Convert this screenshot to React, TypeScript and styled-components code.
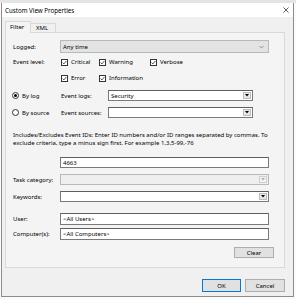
import React from 'react';
import styled, { createGlobalStyle } from 'styled-components';

const GlobalStyle = createGlobalStyle`
  html, body {
    margin: 0;
    padding: 0;
    background: #fbfbfb;
  }
  body {
    font-family: "Noto Sans", "DejaVu Sans", sans-serif;
    font-size: 6px;
    color: #000;
  }
`;

const Screen = styled.div`
  width: 296px;
  height: 300px;
  overflow: hidden;
  background: #fbfbfb;
`;

const Backdrop = styled.div`
  height: 3px;
  background: #e4e4e4;
`;

const Window = styled.div`
  margin-left: 1px;
  width: 293px;
  height: 294px;
  box-sizing: border-box;
  border: 1px solid #8c8c8c;
  border-top: none;
  background: #f0f0f0;
  display: flex;
  flex-direction: column;
`;

const TitleBar = styled.div`
  height: 14px;
  flex: none;
  background: #ffffff;
  display: flex;
  align-items: center;
  justify-content: space-between;
  padding: 0 4px 0 3px;
`;

const Title = styled.span`
  font-size: 6.2px;
`;

const Body = styled.div`
  flex: 1;
  display: flex;
  flex-direction: column;
  padding: 4px 8px 0 3px;
`;

const TabStrip = styled.div`
  height: 11px;
  display: flex;
  align-items: flex-end;
`;

const Tab = styled.div<{ $active?: boolean; $width: number }>`
  width: ${p => p.$width}px;
  height: ${p => (p.$active ? 12 : 9)}px;
  box-sizing: border-box;
  border: 1px solid #d9d9d9;
  border-bottom: none;
  border-left: ${p => (p.$active ? '1px solid #d9d9d9' : 'none')};
  background: ${p => (p.$active ? '#f4f4f4' : '#f0f0f0')};
  margin-bottom: ${p => (p.$active ? -1 : 0)}px;
  position: relative;
  z-index: ${p => (p.$active ? 1 : 0)};
  display: flex;
  align-items: center;
  padding-left: ${p => (p.$active ? 4 : 5)}px;
  padding-bottom: ${p => (p.$active ? 1 : 0)}px;
`;

const Panel = styled.div`
  width: 280px;
  height: 236px;
  box-sizing: border-box;
  border: 1px solid #d9d9d9;
  background: #f4f4f4;
  padding-left: 7px;
  display: flex;
  flex-direction: column;
`;

const Row = styled.div<{ $top: number; $height: number }>`
  margin-top: ${p => p.$top}px;
  height: ${p => p.$height}px;
  display: flex;
  align-items: center;
  flex: none;
`;

const Label = styled.span<{ $width: number }>`
  width: ${p => p.$width}px;
  flex: none;
  white-space: nowrap;
`;

const Field = styled.div<{ $width: number; $tone?: 'white' | 'disabled' | 'locked' }>`
  width: ${p => p.$width}px;
  height: 100%;
  box-sizing: border-box;
  flex: none;
  display: flex;
  align-items: center;
  justify-content: space-between;
  padding: 0 1px 0 2px;
  border: 1px solid ${p => (p.$tone === 'white' || !p.$tone ? '#7a7a7a' : '#b9b9b9')};
  border-top-color: ${p => (p.$tone === 'white' || !p.$tone ? '#5f5f5f' : '#b9b9b9')};
  background: ${p => (p.$tone === 'locked' ? '#e3e3e3' : p.$tone === 'disabled' ? '#efefef' : '#ffffff')};
`;

const Value = styled.span`
  white-space: nowrap;
`;

const DropButton = styled.span<{ $disabled?: boolean }>`
  width: 8px;
  height: 7px;
  box-sizing: border-box;
  border: 1px solid ${p => (p.$disabled ? '#d0d0d0' : '#bdbdbd')};
  background: ${p => (p.$disabled ? '#f2f2f2' : '#e8e8e8')};
  display: flex;
  align-items: center;
  justify-content: center;
  color: ${p => (p.$disabled ? '#b0b0b0' : '#000')};
`;

const CheckGroup = styled.div`
  display: flex;
  align-items: center;
`;

const CheckItem = styled.div<{ $width: number }>`
  width: ${p => p.$width}px;
  display: flex;
  align-items: center;
  gap: 3px;
`;

const Box = styled.span`
  width: 7px;
  height: 7px;
  box-sizing: border-box;
  border: 1px solid #333;
  background: #fff;
  display: flex;
  align-items: center;
  justify-content: center;
`;

const RadioItem = styled.div<{ $width: number }>`
  width: ${p => p.$width}px;
  flex: none;
  display: flex;
  align-items: center;
  gap: 3px;
  margin-left: -1px;
`;

const Circle = styled.span<{ $on?: boolean }>`
  width: 7px;
  height: 7px;
  box-sizing: border-box;
  border-radius: 50%;
  border: 1px solid #333;
  background: #fff;
  display: flex;
  align-items: center;
  justify-content: center;
  &::after {
    content: '';
    width: 3px;
    height: 3px;
    border-radius: 50%;
    background: ${p => (p.$on ? '#000' : 'transparent')};
  }
`;

const Description = styled.p`
  margin: 0;
  width: 262px;
  line-height: 8px;
`;

const Button = styled.div<{ $width: number; $primary?: boolean }>`
  width: ${p => p.$width}px;
  height: 100%;
  box-sizing: border-box;
  border: 1px solid ${p => (p.$primary ? '#0078d7' : '#adadad')};
  background: #e1e1e1;
  display: flex;
  align-items: center;
  justify-content: center;
`;

const ClearRow = styled(Row)`
  justify-content: flex-end;
  padding-right: 10px;
`;

const Footer = styled.div`
  margin-top: 11px;
  height: 13px;
  display: flex;
  justify-content: flex-end;
  gap: 4px;
`;

const Triangle = () => (
  <svg width="4" height="3" viewBox="0 0 4 3">
    <path d="M0 0 H4 L2 2.6 Z" fill="currentColor" />
  </svg>
);

const Combo = ({ width, value, tone }: { width: number; value?: string; tone?: 'white' | 'disabled' }) => (
  <Field $width={width} $tone={tone}>
    <Value>{value}</Value>
    <DropButton $disabled={tone === 'disabled'}>
      <Triangle />
    </DropButton>
  </Field>
);

const Check = ({ label, width }: { label: string; width: number }) => (
  <CheckItem $width={width}>
    <Box>
      <svg width="5" height="5" viewBox="0 0 5 5">
        <path d="M0.6 2.6 L1.9 3.9 L4.4 1" fill="none" stroke="#222" strokeWidth="0.8" />
      </svg>
    </Box>
    <span>{label}</span>
  </CheckItem>
);

export default function App() {
  return (
    <Screen>
      <GlobalStyle />
      <Backdrop />
      <Window>
        <TitleBar>
          <Title>Custom View Properties</Title>
          <svg width="6" height="6" viewBox="0 0 6 6">
            <path d="M0.5 0.5 L5.5 5.5 M5.5 0.5 L0.5 5.5" stroke="#333" strokeWidth="0.8" />
          </svg>
        </TitleBar>
        <Body>
          <TabStrip>
            <Tab $active $width={26}>Filter</Tab>
            <Tab $width={25}>XML</Tab>
          </TabStrip>
          <Panel>
            <Row $top={7} $height={13}>
              <Label $width={47}>Logged:</Label>
              <Field $width={209} $tone="locked">
                <Value>Any time</Value>
                <svg width="5" height="4" viewBox="0 0 5 4" style={{ marginRight: 3 }}>
                  <path d="M0.5 1 L2.5 3 L4.5 1" fill="none" stroke="#8a8a8a" strokeWidth="0.9" />
                </svg>
              </Field>
            </Row>
            <Row $top={4} $height={10}>
              <Label $width={48}>Event level:</Label>
              <CheckGroup>
                <Check label="Critical" width={38} />
                <Check label="Warning" width={51} />
                <Check label="Verbose" width={50} />
              </CheckGroup>
            </Row>
            <Row $top={6} $height={10}>
              <Label $width={48} />
              <CheckGroup>
                <Check label="Error" width={38} />
                <Check label="Information" width={60} />
              </CheckGroup>
            </Row>
            <Row $top={7} $height={11}>
              <RadioItem $width={49}>
                <Circle $on />
                <span>By log</span>
              </RadioItem>
              <Label $width={47}>Event logs:</Label>
              <Combo width={145} value="Security" />
            </Row>
            <Row $top={6} $height={11}>
              <RadioItem $width={49}>
                <Circle />
                <span>By source</span>
              </RadioItem>
              <Label $width={47}>Event sources:</Label>
              <Combo width={145} />
            </Row>
            <Row $top={13} $height={16}>
              <Description>
                Includes/Excludes Event IDs: Enter ID numbers and/or ID ranges separated by commas. To
                exclude criteria, type a minus sign first. For example 1,3,5-99,-76
              </Description>
            </Row>
            <Row $top={10} $height={11}>
              <Label $width={47} />
              <Field $width={209}>
                <Value>4663</Value>
              </Field>
            </Row>
            <Row $top={6} $height={11}>
              <Label $width={47}>Task category:</Label>
              <Combo width={209} tone="disabled" />
            </Row>
            <Row $top={6} $height={11}>
              <Label $width={47}>Keywords:</Label>
              <Combo width={209} />
            </Row>
            <Row $top={11} $height={12}>
              <Label $width={47}>User:</Label>
              <Field $width={209}>
                <Value>&lt;All Users&gt;</Value>
              </Field>
            </Row>
            <Row $top={3} $height={12}>
              <Label $width={47}>Computer(s):</Label>
              <Field $width={209}>
                <Value>&lt;All Computers&gt;</Value>
              </Field>
            </Row>
            <ClearRow $top={7} $height={11}>
              <Button $width={40}>Clear</Button>
            </ClearRow>
          </Panel>
          <Footer>
            <Button $width={39} $primary>OK</Button>
            <Button $width={40}>Cancel</Button>
          </Footer>
        </Body>
      </Window>
    </Screen>
  );
}
